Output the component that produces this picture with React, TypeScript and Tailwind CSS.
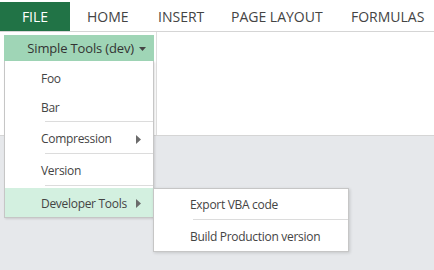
const tabs = [
  { label: "HOME", w: "w-[71px]" },
  { label: "INSERT", w: "w-[73px]" },
  { label: "PAGE LAYOUT", w: "w-[120px]" },
  { label: "FORMULAS", w: "w-[100px]" },
];

function Arrow() {
  return (
    <svg width="5" height="9" viewBox="0 0 5 9" className="fill-[#6b6b6b]">
      <path d="M0 0 L5 4.5 L0 9 Z" />
    </svg>
  );
}

function Sep({ inset }: { inset: string }) {
  return <div className={`h-px bg-[#dcdcdc] ${inset}`} />;
}

export default function App() {
  return (
    <div className="relative h-[270px] w-[434px] overflow-hidden bg-[#e6e8eb] font-['Segoe_UI','Open_Sans',sans-serif] text-[#444]">
      {/* tab bar */}
      <div className="flex h-[32px] border-b border-[#d5d5d5] bg-white pt-[2px]">
        <div className="flex w-[70px] items-center justify-center bg-[#217346] text-[14px] text-white">FILE</div>
        {tabs.map((t) => (
          <div key={t.label} className={`flex items-center pl-[17px] text-[14px] text-[#444] ${t.w}`}>
            {t.label}
          </div>
        ))}
      </div>

      {/* ribbon */}
      <div className="flex h-[104px] border-b border-[#d5d5d5] bg-white">
        <div className="w-[157px] border-r border-[#dedede]" />
      </div>

      {/* dropdown */}
      <div className="absolute left-[4px] top-[35px] w-[150px]">
        <div className="flex h-[26px] items-center justify-end gap-[5px] bg-[#9fd5b6] pr-[8px] pt-[1px] text-[13px] tracking-[-0.15px] text-[#333]">
          <span>Simple Tools (dev)</span>
          <svg width="7" height="4" viewBox="0 0 7 4" className="fill-[#444]">
            <path d="M0 0 H7 L3.5 4 Z" />
          </svg>
        </div>
        <div className="border border-t-0 border-[#c6c6c6] bg-white pt-[2px] text-[12px] tracking-[-0.3px] shadow-[1px_1px_2px_rgba(0,0,0,0.12)]">
          <div className="flex h-[29px] items-center pl-[36px] pt-[3px]">Foo</div>
          <div className="flex h-[29px] items-center pl-[36px] pt-[3px]">Bar</div>
          <Sep inset="ml-[40px]" />
          <div className="flex h-[31px] items-center justify-between pl-[36px] pr-[12px] pt-[3px]">
            <span>Compression</span>
            <Arrow />
          </div>
          <Sep inset="ml-[40px]" />
          <div className="flex h-[31px] items-center pl-[36px] pt-[3px]">Version</div>
          <Sep inset="ml-[40px]" />
          <div className="mt-[2px] flex h-[29px] items-center justify-between bg-[#d3f0e0] pl-[36px] pr-[12px] pt-[2px]">
            <span>Developer Tools</span>
            <Arrow />
          </div>
        </div>
      </div>

      {/* submenu */}
      <div className="absolute left-[153px] top-[188px] w-[196px] border border-[#c6c6c6] bg-white text-[12px] tracking-[-0.3px] shadow-[1px_1px_3px_rgba(0,0,0,0.15)]">
        <div className="flex h-[30px] items-center pl-[36px] pt-[2px]">Export VBA code</div>
        <Sep inset="ml-[39px]" />
        <div className="flex h-[31px] items-center pl-[36px] pt-[2px]">Build Production version</div>
      </div>
    </div>
  );
}
